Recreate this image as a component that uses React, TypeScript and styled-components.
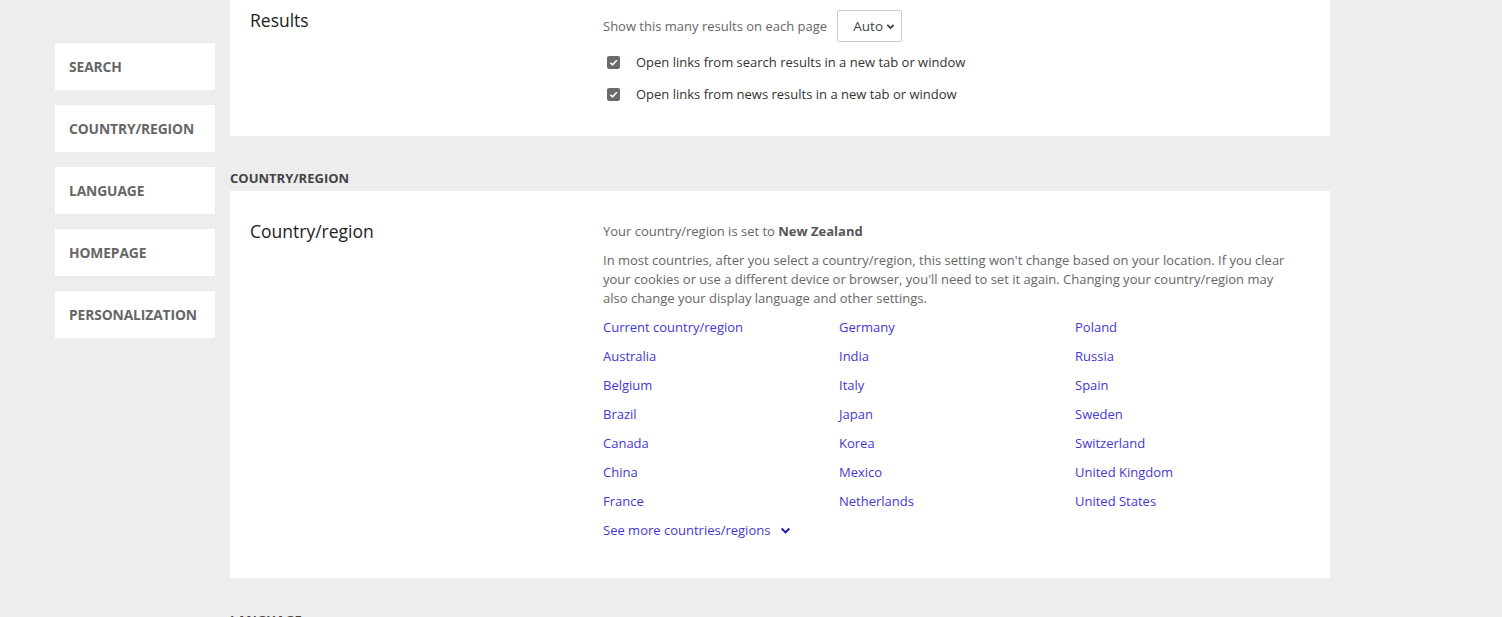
import React from 'react';
import styled, { createGlobalStyle } from 'styled-components';

const GlobalStyle = createGlobalStyle`
  html, body {
    margin: 0;
    padding: 0;
    background: #ededed;
    font-family: "Open Sans", "Noto Sans", sans-serif;
    overflow: hidden;
  }
`;

const Page = styled.div`
  display: flex;
  align-items: flex-start;
  gap: 15px;
  padding-left: 55px;
`;

/* left nav */
const Nav = styled.nav`
  width: 160px;
  margin-top: 43px;
  display: flex;
  flex-direction: column;
  gap: 15px;
`;

const NavItem = styled.a`
  height: 47px;
  background: #fff;
  display: flex;
  align-items: center;
  padding-left: 14px;
  font-size: 13.8px;
  font-weight: 700;
  color: #666;
  text-transform: uppercase;
  letter-spacing: -0.1px;
`;

const Main = styled.main`
  width: 1100px;
`;

const Card = styled.section<{ $top: number; $bottom: number }>`
  background: #fff;
  display: grid;
  grid-template-columns: 353px 1fr;
  padding: ${p => p.$top}px 20px ${p => p.$bottom}px;
`;

const CardTitle = styled.h3`
  margin: 0;
  font-size: 17.5px;
  font-weight: 400;
  color: #222;
  line-height: 24px;
`;

const SectionLabel = styled.h2`
  margin: 0;
  padding: 32px 0 3px;
  font-size: 13px;
  font-weight: 700;
  line-height: 20px;
  color: #444;
  text-transform: uppercase;
`;

const Body = styled.div`
  font-size: 13px;
  color: #666;
`;

const SelectRow = styled.div`
  display: flex;
  align-items: center;
  gap: 10px;
  margin-top: 2px;
`;

const SelectBox = styled.div`
  width: 65px;
  height: 32px;
  box-sizing: border-box;
  border: 1px solid #ccc;
  border-radius: 2px;
  display: flex;
  align-items: center;
  justify-content: flex-end;
  gap: 3px;
  padding-right: 6px;
  font-size: 13.5px;
  color: #444;
`;

const CheckList = styled.div`
  margin-top: 4px;
  display: flex;
  flex-direction: column;
`;

const CheckRow = styled.label`
  display: flex;
  align-items: center;
  gap: 16px;
  height: 32px;
  padding-left: 4px;
  color: #333;
`;

const Box = styled.span`
  width: 13px;
  height: 13px;
  border-radius: 2px;
  background: #6b6b6b;
  display: flex;
  align-items: center;
  justify-content: center;
`;

const Line = styled.p<{ $mt?: number; $mb?: number }>`
  margin: ${p => p.$mt ?? 0}px 0 ${p => p.$mb ?? 0}px;
  max-width: 690px;
  line-height: 19px;
  strong {
    color: #555;
    font-weight: 700;
  }
`;

const LinkGrid = styled.div`
  display: grid;
  grid-template-columns: repeat(3, 236px);
  row-gap: 10px;
  margin-top: 1px;
`;

const RegionLink = styled.a`
  line-height: 19px;
  color: #4438d2;
  cursor: pointer;
`;

const MoreLink = styled(RegionLink)`
  display: inline-flex;
  align-items: center;
  gap: 10px;
  margin-top: 10px;
`;

const Chevron = ({ color, size }: { color: string; size: number }) => (
  <svg width={size} height={size} viewBox="0 0 10 10">
    <path d="M1.5 3.2 L5 6.7 L8.5 3.2" fill="none" stroke={color} strokeWidth="1.8" />
  </svg>
);

const Tick = () => (
  <svg width="9" height="9" viewBox="0 0 10 10">
    <path d="M1.5 5.2 L4 7.6 L8.6 2.4" fill="none" stroke="#fff" strokeWidth="1.7" />
  </svg>
);

const NAV = ['Search', 'Country/Region', 'Language', 'Homepage', 'Personalization'];

const REGIONS = [
  'Current country/region', 'Germany', 'Poland',
  'Australia', 'India', 'Russia',
  'Belgium', 'Italy', 'Spain',
  'Brazil', 'Japan', 'Sweden',
  'Canada', 'Korea', 'Switzerland',
  'China', 'Mexico', 'United Kingdom',
  'France', 'Netherlands', 'United States',
];

export default function App() {
  return (
    <>
      <GlobalStyle />
      <Page>
        <Nav>
          {NAV.map(n => <NavItem key={n}>{n}</NavItem>)}
        </Nav>
        <Main>
          <Card $top={8} $bottom={26}>
            <CardTitle>Results</CardTitle>
            <Body>
              <SelectRow>
                <span>Show this many results on each page</span>
                <SelectBox>Auto <Chevron color="#333" size={9} /></SelectBox>
              </SelectRow>
              <CheckList>
                <CheckRow>
                  <Box><Tick /></Box>
                  Open links from search results in a new tab or window
                </CheckRow>
                <CheckRow>
                  <Box><Tick /></Box>
                  Open links from news results in a new tab or window
                </CheckRow>
              </CheckList>
            </Body>
          </Card>

          <SectionLabel>Country/Region</SectionLabel>
          <Card $top={28} $bottom={38}>
            <CardTitle>Country/region</CardTitle>
            <Body>
              <Line $mt={3} $mb={10}>
                Your country/region is set to <strong>New Zealand</strong>
              </Line>
              <Line $mb={10}>
                In most countries, after you select a country/region, this setting won't change based on your
                location. If you clear your cookies or use a different device or browser, you'll need to set it
                again. Changing your country/region may also change your display language and other settings.
              </Line>
              <LinkGrid>
                {REGIONS.map(r => <RegionLink key={r}>{r}</RegionLink>)}
              </LinkGrid>
              <MoreLink>
                See more countries/regions <Chevron color="#1a1ab8" size={11} />
              </MoreLink>
            </Body>
          </Card>

          <SectionLabel>Language</SectionLabel>
        </Main>
      </Page>
    </>
  );
}
